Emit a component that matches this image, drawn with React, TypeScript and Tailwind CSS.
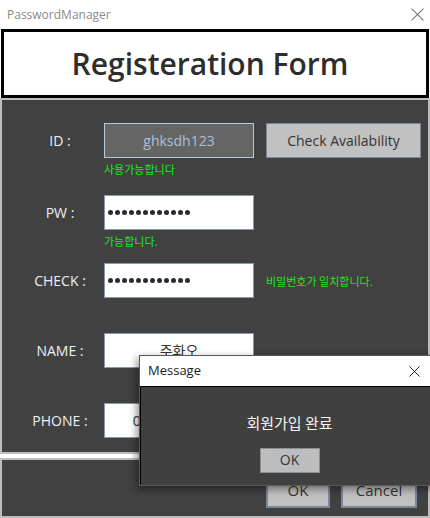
const latin = "font-['Segoe_UI','Open_Sans','Noto_Sans_CJK_KR',sans-serif]";
const korean = "font-['Noto_Sans_CJK_KR','Noto_Sans',sans-serif]";

const Dots = () => (
  <span className="flex items-center gap-[2px] pl-[3px]">
    {Array.from({ length: 12 }).map((_, i) => (
      <span key={i} className="block w-[5px] h-[5px] rounded-full bg-[#2a2a33]" />
    ))}
  </span>
);

const CloseIcon = ({ color, size }: { color: string; size: number }) => (
  <svg width={size} height={size} viewBox="0 0 12 12" fill="none">
    <path d="M0.5 0.5 L11.5 11.5 M11.5 0.5 L0.5 11.5" stroke={color} strokeWidth="1" />
  </svg>
);

const Label = ({ text }: { text: string }) => (
  <div className={`w-[88px] h-[35px] flex items-center justify-center text-[14px] text-[#eef0f4] ${latin}`}>
    {text}
  </div>
);

const Note = ({ text }: { text: string }) => (
  <div className={`text-[11px] leading-[12px] text-[#1fe61f] ${korean}`}>{text}</div>
);

export default function App() {
  return (
    <div className="relative w-[430px] h-[518px] overflow-hidden bg-white">
      {/* window title bar */}
      <div className="h-[29px] flex items-center justify-between pl-[7px] pr-[6px]">
        <span className={`text-[12px] text-[#8a8a8a] ${latin}`}>PasswordManager</span>
        <CloseIcon color="#777" size={13} />
      </div>

      {/* header */}
      <div className="mx-[1px] h-[69px] border-[3px] border-black flex items-center justify-center pr-[10px]">
        <h1 className={`text-[30px] font-semibold text-[#2d2d2d] ${latin}`}>Registeration Form</h1>
      </div>

      {/* form panel */}
      <div className="h-[356px] bg-[#414141] border-2 border-[#bdbdbd] pl-[14px] pt-[23px]">
        <div className="flex h-[72px]">
          <Label text="ID :" />
          <div className="flex flex-col gap-[5px]">
            <div className={`w-[150px] h-[35px] bg-[#656565] border border-[#b9cadc] flex items-center justify-center text-[14px] text-[#a9c0da] ${latin}`}>
              ghksdh123
            </div>
            <Note text="사용가능합니다" />
          </div>
          <button className={`ml-[12px] w-[155px] h-[35px] bg-[#c1c1c1] border border-[#7b8896] text-[14px] text-[#333] ${latin}`}>
            Check Availability
          </button>
        </div>

        <div className="flex h-[68px]">
          <Label text="PW :" />
          <div className="flex flex-col gap-[5px]">
            <div className="w-[150px] h-[35px] bg-white border border-[#8a98a8] flex items-center">
              <Dots />
            </div>
            <Note text="가능합니다." />
          </div>
        </div>

        <div className="flex h-[70px]">
          <Label text="CHECK :" />
          <div className="w-[150px] h-[35px] bg-white border border-[#8a98a8] flex items-center">
            <Dots />
          </div>
          <div className="ml-[12px] h-[35px] flex items-center">
            <Note text="비밀번호가 일치합니다." />
          </div>
        </div>

        <div className="flex h-[70px]">
          <Label text="NAME :" />
          <div className={`w-[150px] h-[35px] bg-white border border-[#8a98a8] flex items-center justify-center text-[14px] text-[#333] ${korean}`}>
            주화오
          </div>
        </div>

        <div className="flex">
          <Label text="PHONE :" />
          <div className={`w-[150px] h-[35px] bg-white border border-[#8a98a8] flex items-center justify-center text-[14px] text-[#333] ${latin}`}>
            010-12345678
          </div>
        </div>
      </div>

      {/* bottom buttons panel */}
      <div className="mt-[4px] h-[60px] bg-[#414141] border-2 border-[#bdbdbd] flex justify-end items-start gap-[11px] pt-[12px] pr-[11px]">
        <button className={`w-[64px] h-[36px] bg-[#c1c1c1] border-2 border-[#7b8896] text-[15px] text-[#333] ${latin}`}>OK</button>
        <button className={`w-[76px] h-[36px] bg-[#c1c1c1] border-2 border-[#7b8896] text-[15px] text-[#333] ${latin}`}>Cancel</button>
      </div>

      {/* message dialog */}
      <div className="absolute left-[139px] top-[355px] w-[300px] h-[131px] flex flex-col border border-[#5a5a5a] shadow-[-2px_3px_8px_rgba(0,0,0,0.45)]">
        <div className="h-[31px] bg-white flex items-center justify-between pl-[8px] pr-[18px] border-b border-black">
          <span className={`text-[13px] text-[#1a1a1a] ${latin}`}>Message</span>
          <CloseIcon color="#111" size={11} />
        </div>
        <div className="flex-1 bg-[#404040] border-l border-black flex flex-col items-center">
          <div className={`mt-[25px] text-[15px] text-[#f4f4f4] ${korean}`}>회원가입 완료</div>
          <button className={`mt-[13px] w-[60px] h-[25px] bg-[#bdbdbd] border border-[#8a8f96] flex items-center justify-center ${latin}`}>
            <span className="px-[1px] border border-dotted border-[#a3bbd6] text-[14px] leading-[16px] text-[#333]">OK</span>
          </button>
        </div>
      </div>
    </div>
  );
}
